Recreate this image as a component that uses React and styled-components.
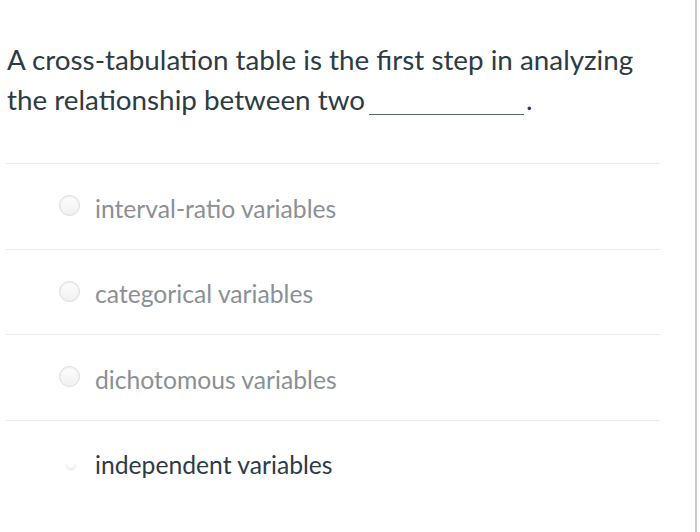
import React from "react";
import styled, { createGlobalStyle } from "styled-components";

const Global = createGlobalStyle`
  html, body {
    margin: 0;
    padding: 0;
    background: #fff;
  }
  body {
    font-family: Lato, "Open Sans", sans-serif;
    color: #2d3b45;
  }
`;

const Page = styled.div`
  display: flex;
  height: 532px;
  width: 700px;
  overflow: hidden;
`;

const Panel = styled.div`
  width: 697px;
  border-right: 2px solid #c9c9c9;
  box-sizing: border-box;
  padding-left: 6px;
`;

const Content = styled.div`
  width: 654px;
`;

const Question = styled.div`
  font-size: 27.8px;
  line-height: 40px;
  padding: 40px 0 0 1px;
  height: 163px;
  box-sizing: border-box;
  color: #2d3b45;
`;

const Blank = styled.span`
  display: inline-block;
  width: 155px;
  border-bottom: 1.5px solid #5b6670;
  margin: 0 2px 0 4px;
  vertical-align: -5px;
`;

const Option = styled.div`
  display: flex;
  align-items: center;
  height: 85.5px;
  border-top: 1.5px solid #ececec;
  box-sizing: border-box;
  padding-top: 4px;
  padding-left: ${(p) => (p.$selected ? "60px" : "53px")};
  font-size: 24.7px;
  color: ${(p) => (p.$selected ? "#2d3b45" : "#8b9096")};
`;

const Radio = styled.span`
  flex: none;
  width: 21px;
  height: 21px;
  border-radius: 50%;
  border: 1px solid #dcdcdc;
  background: linear-gradient(#fdfdfd, #f1f1f1);
  box-shadow: inset 0 1px 2px rgba(0, 0, 0, 0.06);
  margin: 0 15px 5px 0;
  box-sizing: border-box;
`;

const Dot = styled.span`
  flex: none;
  width: 10px;
  height: 8px;
  border-radius: 50%;
  background: radial-gradient(circle at 50% 30%, #fff 40%, #e3e3e3 100%);
  box-shadow: 0 1px 1px rgba(0, 0, 0, 0.12);
  margin: 0 19px 0 0;
`;

const Label = styled.span``;

const options = [
  { text: "interval-ratio variables" },
  { text: "categorical variables" },
  { text: "dichotomous variables" },
  { text: "independent variables", selected: true },
];

export default function App() {
  return (
    <Page>
      <Global />
      <Panel>
        <Content>
          <Question>
            A cross-tabulation table is the first step in analyzing the
            relationship between two
            <Blank />.
          </Question>
          {options.map((o) => (
            <Option key={o.text} $selected={o.selected}>
              {o.selected ? <Dot /> : <Radio />}
              <Label>{o.text}</Label>
            </Option>
          ))}
        </Content>
      </Panel>
    </Page>
  );
}
